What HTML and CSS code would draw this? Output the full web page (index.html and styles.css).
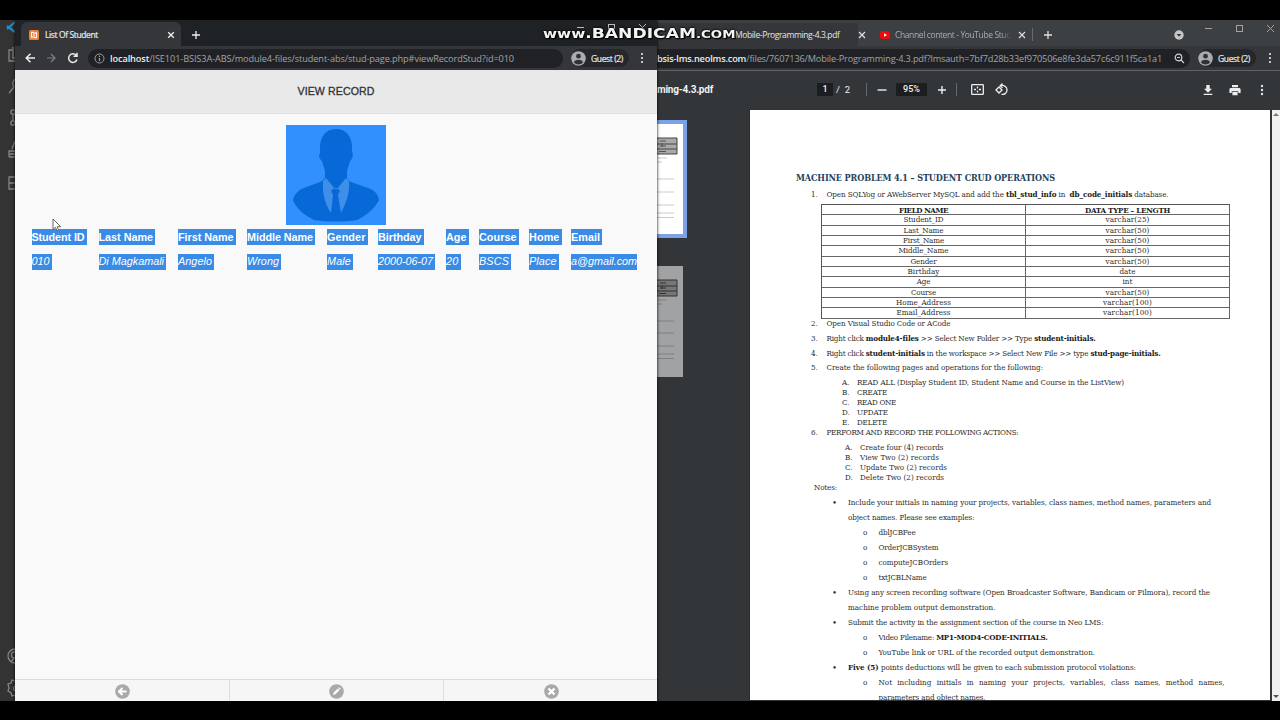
FILE: index.html
```html
<!DOCTYPE html>
<html lang="en">
<head>
<meta charset="utf-8">
<title>List Of Student</title>
<link rel="stylesheet" href="styles.css">
</head>
<body>
<div class="desktop">
  <aside class="activity">
    <svg width="15" height="680" viewBox="0 20 15 680" fill="none" stroke="#858585" stroke-width="1.3">
      <path d="M15 22l-8 7M15 32l-8-6" stroke="#2489ca" stroke-width="2.2"/>
      <path d="M13 47v11h3M12 50H9v11h6"/>
      <path d="M9 93l5-6M15 79a6 6 0 0 0-1 8"/>
      <circle cx="13" cy="112" r="2.2"/><circle cx="13" cy="123" r="2.2"/><path d="M13 114v7"/>
      <path d="M15 141l-3 8M9 157v-6h6M9 154h6M9 157h6"/>
      <path d="M15 177H9v12h6M9 183h6"/>
      <path d="M15 649a7 7 0 0 0 0 14M15 652a3 3 0 0 0-1 6l-3 4"/>
      <path d="M15 681l-3-1-1 3-3 1 1 4-1 3 3 2 1 3 3-1M15 686a3 3 0 0 0 0 5"/>
    </svg>
  </aside>

  <section class="window viewer">
    <div class="v-tabs">
      <div class="v-tab-active"><span class="fit ui" data-w="104.5">Mobile-Programming-4.3.pdf</span></div>
      <svg class="v-x" width="8" height="8" viewBox="0 0 8 8"><path d="M1 1l6 6M7 1L1 7" stroke="#ddd" stroke-width="1.3"/></svg>
      <svg class="yt" width="10" height="8" viewBox="0 0 10 8"><rect width="10" height="8" rx="2" fill="#f00b0b"/><path d="M4 2.2L7 4 4 5.8z" fill="#fff"/></svg>
      <span class="fit ui dim fade" data-w="116">Channel content - YouTube Stud</span>
      <svg class="v-x2" width="8" height="8" viewBox="0 0 8 8"><path d="M1 1l6 6M7 1L1 7" stroke="#ddd" stroke-width="1.2"/></svg>
      <i class="bar"></i>
      <svg class="v-plus" width="10" height="10" viewBox="0 0 10 10"><path d="M5 1v8M1 5h8" stroke="#ddd" stroke-width="1.3"/></svg>
      <svg class="v-down" width="10" height="10" viewBox="0 0 10 10"><circle cx="5" cy="5" r="4.7" fill="#c4c6c8"/><path d="M2.7 4h4.6L5 6.8z" fill="#333"/></svg>
      <svg class="v-ctl" width="74" height="10" viewBox="0 0 74 10" fill="none" stroke="#a0a2a4"><path d="M1 4.500h7"/><rect x="32.500" y="1.500" width="6" height="6"/><path d="M63 1l7 7M70 1l-7 7"/></svg>
    </div>
    <div class="v-addr">
      <div class="v-omni">
        <span class="fit ui url" data-w="505"><b>bsis-lms.neolms.com</b>/files/7607136/Mobile-Programming-4.3.pdf?lmsauth=7bf7d28b33ef970506e8fe3da57c6c911f5ca1a1</span>
        <svg width="11" height="11" viewBox="0 0 11 11" fill="none" stroke="#d0d2d4" stroke-width="1.2"><circle cx="4.500" cy="4.500" r="3.300"/><path d="M7 7l3 3M3 4.500h3"/></svg>
      </div>
      <div class="guest"><svg width="15" height="15" viewBox="0 0 15 15"><circle cx="7.500" cy="7.500" r="7.300" fill="#a8adb3"/><circle cx="7.500" cy="5.200" r="2.400" fill="#303236"/><path d="M2.800 11.200c1.500-3.300 7.900-3.300 9.400 0a6 6 0 0 1-9.400 0z" fill="#303236"/></svg><span class="fit ui" data-w="32">Guest (2)</span></div>
      <svg class="v-dots" width="4" height="12" viewBox="0 0 4 12" fill="#e5e5e5"><circle cx="2" cy="2" r="1.100"/><circle cx="2" cy="6" r="1.100"/><circle cx="2" cy="10" r="1.100"/></svg>
    </div>
    <div class="pdfbar">
      <b class="fit rb pdfname" data-w="56">ming-4.3.pdf</b>
      <span class="box pn">1</span><span class="rb of">/&nbsp; 2</span>
      <i class="bar b1"></i>
      <svg class="minus" width="10" height="10" viewBox="0 0 10 10"><path d="M.5 5h9" stroke="#eee" stroke-width="1.400"/></svg>
      <span class="box pc">95%</span>
      <svg class="plus" width="10" height="10" viewBox="0 0 10 10"><path d="M1 5h8M5 1v8" stroke="#eee" stroke-width="1.400"/></svg>
      <i class="bar b2"></i>
      <svg class="fitp" width="13" height="11" viewBox="0 0 13 11" fill="none" stroke="#eee" stroke-width="1.300"><rect x=".700" y=".700" width="11.600" height="9.600" rx=".6"/><path d="M3 5.500h2M8 5.500h2M6.500 2.500v2M6.500 6.500v2"/></svg>
      <svg class="rot" width="13" height="13" viewBox="0 0 13 13" fill="none" stroke="#eee" stroke-width="1.300"><path d="M4 4l3 3-3 3-3-3zM5.500 2.700c3.500-1 6.500 1 6.500 4.300s-3 5-5.500 4.200M7.500.5L5.200 2.700l2.300 2.200"/></svg>
      <svg class="dl" width="10" height="12" viewBox="0 0 10 12" fill="#eee"><path d="M3.300 1h3.400v3.700H9L5 8.700 1 4.700h2.300zM.7 9.700h8.600V11H.7z"/></svg>
      <svg class="pr" width="12" height="12" viewBox="0 0 12 12" fill="#eee"><path d="M3 1h6v2.300H3zM2 4h8c1 0 1.600.6 1.600 1.600V9H9.300V7.300H2.700V9H.4V5.600C.4 4.600 1 4 2 4zM3.400 8h5.200v3.200H3.400z"/></svg>
      <svg width="4" height="12" viewBox="0 0 4 12" fill="#e5e5e5"><circle cx="2" cy="2" r="1.200"/><circle cx="2" cy="6" r="1.200"/><circle cx="2" cy="10" r="1.200"/></svg>
    </div>
    <div class="v-main">
      <div class="thumbs">
        <div class="thumb sel"><svg width="26" height="111" viewBox="0 0 26 111"><path fill="#a9a9a9" d="M0 14h20v16H0z"/><path d="M0 14h20v16H0M0 20h20M0 25h20" fill="none" stroke="#444"/><path d="M3 17h6M3 22h6M2 27.500h7M5 19v4" stroke="#555"/><path d="M0 34h10M0 38h5M0 55h17M0 68h17M0 81h17M0 89h17M0 93.500h17" stroke="#ccc"/></svg></div>
        <div class="thumb"><svg width="26" height="111" viewBox="0 0 26 111"><path fill="#777" d="M0 14h20v16H0z"/><path d="M0 14h20v16H0M0 20h20M0 25h20" fill="none" stroke="#333"/><path d="M3 17h6M3 22h6M2 27.500h7M5 19v4" stroke="#333"/><path d="M0 34h10M0 38h5M0 55h17M0 67h17M0 80h17M0 88h17M0 92.500h17" stroke="#808182"/></svg></div>
      </div>
      <article class="page">
        <h1 class="l"><span class="fit" data-w="259">MACHINE PROBLEM 4.1 – STUDENT CRUD OPERATIONS</span></h1>
        <div class="l n"><i>1.</i><span class="fit" data-w="342">Open SQLYog or AWebServer MySQL and add the <b>tbl_stud_info</b> in &nbsp;<b>db_code_initials</b> database.</span></div>
        <div class="fields">
          <b><span class="fit" data-w="49">FIELD NAME</span></b><b><span class="fit" data-w="85">DATA TYPE – LENGTH</span></b>
          <p><span class="fit" data-w="40">Student_ID</span></p><p><span class="fit" data-w="44">varchar(25)</span></p>
          <p><span class="fit" data-w="40">Last_Name</span></p><p><span class="fit" data-w="44">varchar(50)</span></p>
          <p><span class="fit" data-w="41">First_Name</span></p><p><span class="fit" data-w="44">varchar(50)</span></p>
          <p><span class="fit" data-w="50">Middle_Name</span></p><p><span class="fit" data-w="44">varchar(50)</span></p>
          <p><span class="fit" data-w="26">Gender</span></p><p><span class="fit" data-w="44">varchar(50)</span></p>
          <p><span class="fit" data-w="32">Birthday</span></p><p><span class="fit" data-w="16">date</span></p>
          <p><span class="fit" data-w="13.5">Age</span></p><p><span class="fit" data-w="10">int</span></p>
          <p><span class="fit" data-w="25">Course</span></p><p><span class="fit" data-w="44">varchar(50)</span></p>
          <p><span class="fit" data-w="55">Home_Address</span></p><p><span class="fit" data-w="49">varchar(100)</span></p>
          <p><span class="fit" data-w="54">Email_Address</span></p><p><span class="fit" data-w="49">varchar(100)</span></p>
        </div>
        <div class="l n t"><i>2.</i><span class="fit" data-w="124">Open Visual Studio Code or ACode</span></div>
        <div class="l n gap2"><i>3.</i><span class="fit" data-w="268.5">Right click <b>module4-files</b> &gt;&gt; Select New Folder &gt;&gt; Type <b>student-initials.</b></span></div>
        <div class="l n"><i>4.</i><span class="fit" data-w="334">Right click <b>student-initials</b> in the workspace &gt;&gt; Select New File &gt;&gt; type <b>stud-page-initials.</b></span></div>
        <div class="l n"><i>5.</i><span class="fit" data-w="216.5">Create the following pages and operations for the following:</span></div>
        <div class="l a t gap3"><i>A.</i><span class="fit" data-w="267">READ ALL (Display Student ID, Student Name and Course in the ListView)</span></div>
        <div class="l a t"><i>B.</i><span class="fit" data-w="30">CREATE</span></div>
        <div class="l a t"><i>C.</i><span class="fit" data-w="39">READ ONE</span></div>
        <div class="l a t"><i>D.</i><span class="fit" data-w="31">UPDATE</span></div>
        <div class="l a t"><i>E.</i><span class="fit" data-w="30">DELETE</span></div>
        <div class="l n t"><i>6.</i><span class="fit" data-w="192">PERFORM AND RECORD THE FOLLOWING ACTIONS:</span></div>
        <div class="l a2 t gap5"><i>A.</i><span class="fit" data-w="83.5">Create four (4) records</span></div>
        <div class="l a2 t"><i>B.</i><span class="fit" data-w="79">View Two (2) records</span></div>
        <div class="l a2 t"><i>C.</i><span class="fit" data-w="87">Update Two (2) records</span></div>
        <div class="l a2 t"><i>D.</i><span class="fit" data-w="84">Delete Two (2) records</span></div>
        <div class="l notes t"><span class="fit" data-w="23">Notes:</span></div>
        <div class="l d gap2"><i>•</i><span class="fit" data-w="363">Include your initials in naming your projects, variables, class names, method names, parameters and</span></div>
        <div class="l d"><i></i><span class="fit" data-w="126.5">object names. Please see examples:</span></div>
        <div class="l o"><i>o</i><span class="fit" data-w="37">dblJCBFee</span></div>
        <div class="l o"><i>o</i><span class="fit" data-w="60">OrderJCBSystem</span></div>
        <div class="l o"><i>o</i><span class="fit" data-w="69.5">computeJCBOrders</span></div>
        <div class="l o"><i>o</i><span class="fit" data-w="48">txtJCBLName</span></div>
        <div class="l d"><i>•</i><span class="fit" data-w="362">Using any screen recording software (Open Broadcaster Software, Bandicam or Filmora), record the</span></div>
        <div class="l d"><i></i><span class="fit" data-w="147.5">machine problem output demonstration.</span></div>
        <div class="l d"><i>•</i><span class="fit" data-w="255.5">Submit the activity in the assignment section of the course in Neo LMS:</span></div>
        <div class="l o"><i>o</i><span class="fit" data-w="169">Video Filename: <b>MP1-MOD4-CODE-INITIALS.</b></span></div>
        <div class="l o"><i>o</i><span class="fit" data-w="216.5">YouTube link or URL of the recorded output demonstration.</span></div>
        <div class="l d"><i>•</i><span class="fit" data-w="288"><b>Five (5)</b> points deductions will be given to each submission protocol violations:</span></div>
        <div class="l o"><i>o</i><span class="fit wide" data-w="346">Not including initials in naming your projects, variables, class names, method names,</span></div>
        <div class="l o"><i></i><span class="fit" data-w="107">parameters and object names.</span></div>
      </article>
      <div class="scroll"><svg width="8" height="8" viewBox="0 0 8 8"><path d="M1 6l3-3 3 3z" fill="#777"/></svg><svg width="8" height="8" viewBox="0 0 8 8"><path d="M1 2h6L4 5z" fill="#555"/></svg></div>
    </div>
  </section>

  <section class="window browser">
    <div class="tabs">
      <div class="tab">
        <svg width="10" height="10" viewBox="0 0 10 10"><rect width="10" height="10" rx="1.500" fill="#ef8138"/><path d="M2.500 3c0-1.200 1.500-1 2.500 0s2.500-1.200 2.500 0v4c0 1.200-1.500 1-2.500 0s-2.500 1.200-2.500 0zM4 5h2" fill="none" stroke="#fff" stroke-width="1.100"/></svg>
        <span class="fit ui" data-w="53">List Of Student</span>
        <svg class="x" width="8" height="8" viewBox="0 0 8 8"><path d="M1.200 1.200l5.600 5.600M6.800 1.200L1.200 6.800" stroke="#eee" stroke-width="1.400"/></svg>
      </div>
      <svg class="new" width="10" height="10" viewBox="0 0 10 10"><path d="M5 1v8M1 5h8" stroke="#eee" stroke-width="1.300"/></svg>
      <svg class="ctl" width="74" height="10" viewBox="0 0 74 10" fill="none" stroke="#bbb"><path d="M1 4.500h7"/><rect x="32.500" y="1.500" width="6" height="6"/><path d="M63 1l7 7M70 1l-7 7"/></svg>
    </div>
    <div class="addr">
      <svg width="53" height="12" viewBox="0 0 53 12" fill="none" stroke="#eee" stroke-width="1.500"><path d="M10 6H1.500M5.500 1.700L1.200 6l4.300 4.300"/><path d="M22 6h8M26 2l4 4-4 4" stroke="#7d8084" stroke-width="1.200"/><path d="M51.200 3.300A4.300 4.300 0 1 0 52 7.500M52 .8v3.400h-3.500"/></svg>
      <div class="omni">
        <svg width="11" height="11" viewBox="0 0 11 11" fill="none" stroke="#9aa0a6"><circle cx="5.500" cy="5.500" r="4.500"/><path d="M5.500 5v3M5.500 2.800v1.200" stroke-width="1.200"/></svg>
        <span class="fit ui url" data-w="404"><b>localhost</b>/ISE101-BSIS3A-ABS/module4-files/student-abs/stud-page.php#viewRecordStud?id=010</span>
      </div>
      <div class="guest"><svg width="15" height="15" viewBox="0 0 15 15"><circle cx="7.500" cy="7.500" r="7.300" fill="#a8adb3"/><circle cx="7.500" cy="5.200" r="2.400" fill="#303236"/><path d="M2.800 11.200c1.500-3.300 7.900-3.300 9.400 0a6 6 0 0 1-9.400 0z" fill="#303236"/></svg><span class="fit ui" data-w="32">Guest (2)</span></div>
      <svg class="dots" width="4" height="12" viewBox="0 0 4 12" fill="#e5e5e5"><circle cx="2" cy="2" r="1.100"/><circle cx="2" cy="6" r="1.100"/><circle cx="2" cy="10" r="1.100"/></svg>
    </div>
    <header class="head"><span class="fit" data-w="77">VIEW RECORD</span></header>
    <main class="record">
      <svg class="avatar" width="100" height="100" viewBox="0 0 100 100"><rect width="100" height="100" fill="#3290fe"/><path d="M34 28C33 12 39 4 50 4s17 8 16 23c2 2 0 8-2 9l-3 10v7l2 3c15 7 28 6 30 19-5 10-14 16-22 20-14 2-29 2-43 0C20 91 10 84 7 75c3-13 17-13 29-19l3-3v-7l-3-10c-2-1-4-6-2-8z" fill="#0768d8"/><path d="M37 56l3-3 9 11h2l9-11 3 3c1 12-3 22-8 32l-3-18 2-4-3-3h-3l-3 3 2 4-2 18c-6-9-9-20-8-32z" fill="#3f8fe9"/></svg>
      <div class="cols">
        <div><b><span class="fit" data-w="53">Student ID</span></b><em><span class="fit" data-w="18">010</span></em></div>
        <div><b><span class="fit" data-w="54.500">Last Name</span></b><em><span class="fit" data-w="65.5">Di Magkamali</span></em></div>
        <div><b><span class="fit" data-w="55.5">First Name</span></b><em><span class="fit" data-w="34">Angelo</span></em></div>
        <div><b><span class="fit" data-w="66">Middle Name</span></b><em><span class="fit" data-w="32">Wrong</span></em></div>
        <div><b><span class="fit" data-w="38.5">Gender</span></b><em><span class="fit" data-w="24">Male</span></em></div>
        <div><b><span class="fit" data-w="43.500">Birthday</span></b><em><span class="fit" data-w="55">2000-06-07</span></em></div>
        <div><b><span class="fit" data-w="20.5">Age</span></b><em><span class="fit" data-w="12.5">20</span></em></div>
        <div><b><span class="fit" data-w="37.5">Course</span></b><em><span class="fit" data-w="30">BSCS</span></em></div>
        <div><b><span class="fit" data-w="30.5">Home</span></b><em><span class="fit" data-w="27.5">Place</span></em></div>
        <div><b><span class="fit" data-w="29">Email</span></b><em class="last"><span class="fit" data-w="66">a@gmail.com</span></em></div>
      </div>
    </main>
    <footer class="foot">
      <a><svg width="15" height="15" viewBox="0 0 15 15"><circle cx="7.500" cy="7.500" r="7.300" fill="#a9a9a9"/><path d="M11.500 7.500h-7M7.500 4L4 7.500 7.500 11" stroke="#fff" stroke-width="2" fill="none"/></svg></a>
      <a><svg width="15" height="15" viewBox="0 0 15 15"><circle cx="7.500" cy="7.500" r="7.300" fill="#a9a9a9"/><path d="M4 11l.7-2.400 4-4 1.700 1.700-4 4zM9.300 4l.9-.8 1.700 1.700-.9.800z" fill="#fff"/></svg></a>
      <a><svg width="15" height="15" viewBox="0 0 15 15"><circle cx="7.500" cy="7.500" r="7.300" fill="#a9a9a9"/><path d="M4.500 4.500l6 6M10.500 4.500l-6 6" stroke="#fff" stroke-width="2.400"/></svg></a>
    </footer>
  </section>

  <div class="watermark"><span>www</span><span class="big">.BANDICAM</span><span class="com">.COM</span></div>
  <svg class="cursor" width="10" height="14" viewBox="0 0 10 14"><path d="M1 1v10.500l2.500-2.200 1.700 3.700 1.500-.7L5.200 8.700h3.500z" fill="#fff" stroke="#555" stroke-width=".9"/></svg>
</div>
<script src="fit.js"></script>
</body>
</html>
```
FILE: styles.css
```css
* { box-sizing: border-box; }
body { margin: 0; width: 1280px; height: 720px; overflow: hidden; background: #000; padding-top: 20px; font-family: "Liberation Sans", sans-serif; }
svg { display: block; flex: none; }
p { margin: 0; }
.desktop { position: relative; width: 1280px; height: 681px; overflow: hidden; background: #323639; }
.fit { display: inline-block; white-space: nowrap; flex: none; }
.ui { font-family: "Open Sans", sans-serif; font-size: 8.500px; color: #e4e6e8; }
.rb { font-family: Roboto, sans-serif; font-size: 10px; color: #f1f1f1; }
.dim { color: #a9acaf; }
.fade { -webkit-mask-image: linear-gradient(90deg, #000 92%, transparent); mask-image: linear-gradient(90deg, #000 92%, transparent); }
.url { font-size: 9.200px; color: #a0a4a8; }
.url b { color: #eceef0; font-weight: 600; }
.activity { width: 15px; height: 681px; background: #333; }
.window { position: absolute; top: 0; height: 681px; display: flex; flex-direction: column; overflow: hidden; }
.bar { width: 1px; height: 13px; background: #66696d; flex: none; }

/* record browser */
.browser { left: 15px; width: 642px; background: #f9f9f9; box-shadow: 0 0 3px #000; }
.tabs { height: 26px; background: #1f2224; display: flex; align-items: center; flex: none; }
.tab { width: 160px; height: 24px; margin: 2px 0 0 6px; border-radius: 6px 6px 0 0; background: #35363a; display: flex; align-items: center; padding: 1px 0 0 8px; }
.tab .ui { margin-left: 6px; }
.x { margin-left: 69px; }
.new { margin: 3px 0 0 10px; }
.ctl { margin: -10px 0 0 375px; }
.addr { height: 24px; flex: none; background: #35363a; display: flex; align-items: center; padding-left: 10px; }
.omni { width: 475px; height: 19px; margin-left: 10px; background: #202124; border-radius: 10px; display: flex; align-items: center; padding-left: 6px; margin-right: 8px; }
.omni .url { margin-left: 5px; }
.guest { height: 18px; width: 58px; border-radius: 9px; background: #25272a; display: flex; align-items: center; flex: none; margin-left: 8px; }
.omni + .guest { margin-left: 0; }
.guest .ui { margin-left: 5px; }
.guest .ui, .tab .ui { -webkit-text-stroke: .2px #eee; }
.dots { margin-left: 11px; }
.head { height: 44px; flex: none; background: #e9e9e9; border-bottom: 1px solid #e0e0e0; display: flex; align-items: center; justify-content: center; padding-bottom: 1px; font-size: 10.600px; color: #333; -webkit-text-stroke: .3px #333; }
.record { flex: 1; background: #f9f9f9; padding-top: 11px; }
.avatar { margin-left: 271px; }
.cols { display: grid; grid-template-columns: 67px 79.500px 69px 80px 51px 68px 33px 50px 42px 70px; padding: 4px 0 0 16.500px; font-size: 10.800px; color: #fff; }
.cols b, .cols em { display: block; width: max-content; height: 16px; line-height: 16px; background: #3a8be6; padding-right: 2px; }
.cols em { margin-top: 8.500px; line-height: 15.500px; }
.cols .last { padding-right: 0; }
.foot { height: 22px; flex: none; background: #f6f6f6; border-top: 1px solid #ddd; display: grid; grid-template-columns: 215px 214px 213px; }
.foot a { display: flex; justify-content: center; padding-top: 4px; border-right: 1px solid #ddd; }
.foot a:last-child { border: 0; padding-left: 2px; }

/* document viewer */
.viewer { left: 657px; width: 623px; background: #323639; }
.v-tabs { height: 26px; flex: none; background: #3c4043; display: flex; align-items: center; padding-top: 3px; }
.v-tab-active { width: 200.500px; height: 24px; display: flex; align-items: center; padding-left: 78px; background: #35363a; }
.yt { margin-left: 14px; }
.v-tabs .dim { margin-left: 5.500px; }
.v-x2 { margin-left: 6.500px; }
.v-tabs .bar { margin-left: 6px; }
.v-plus { margin-left: 10px; }
.v-down { margin-left: 121px; }
.v-ctl { margin: -12px 0 0 20px; }
.v-addr { height: 25px; flex: none; background: #35363a; border-bottom: 1px solid #606366; display: flex; align-items: center; }
.v-omni { width: 533px; height: 19px; border-radius: 0 10px 10px 0; background: #202124; display: flex; align-items: center; }
.v-omni svg { margin-left: 12px; }
.v-dots { margin-left: 12px; }
.pdfbar { height: 39px; flex: none; display: flex; align-items: center; color: #f1f1f1; padding-bottom: 2px; }
.box { background: #1b1d1f; height: 13px; font: 500 9px/13px Roboto, sans-serif; text-align: center; flex: none; }
.pn { width: 16px; margin-left: 104px; }
.of { width: 18px; margin-left: 3px; font-size: 9.500px; white-space: nowrap; flex: none; }
.b1 { margin-left: 12px; }
.minus { margin-left: 10px; }
.pc { width: 31px; margin-left: 9px; }
.plus { margin-left: 10px; }
.b2 { margin-left: 9px; }
.fitp { margin-left: 14px; }
.rot { margin-left: 11px; }
.dl { margin-left: 195px; }
.pr { margin-left: 16px; margin-right: 19px; }
.v-main { flex: 1; display: flex; min-height: 0; }
.thumbs { width: 93px; flex: none; padding-top: 10px; border-right: 1px solid #2b2e31; }
.thumb { width: 26px; height: 111px; margin-top: 28px; background: #a0a2a3; }
.thumb.sel { width: 30px; height: 118px; margin: 0; border: solid #7ba1e6; border-width: 4px 4px 4px 0; background: #fff; }
.page { width: 520px; height: 590px; overflow: hidden; flex: none; background: #fff; padding-top: 60px; color: #2e2e2e; font: 8px/15px "DejaVu Serif Condensed", "DejaVu Serif", serif; }
.l { height: 14.960px; display: flex; align-items: center; }
.l i { font-style: normal; flex: none; }
.l b { color: #1b1b1b; }
.t { height: 10px; line-height: 10px; }
h1.l { margin: 0 0 1.500px; height: 16px; padding-left: 46px; font-size: 9px; color: #243f60; }
.n { padding-left: 61px; }
.n i { width: 15.500px; }
.a { padding-left: 92px; }
.a i { width: 15px; }
.a2 { padding-left: 95px; }
.a2 i { width: 15px; }
.notes { padding-left: 64px; }
.d { padding-left: 82px; }
.d i { width: 16px; font-size: 9.500px; }
.o { padding-left: 113px; }
.o i { width: 15.500px; }
.gap2 { margin-top: 2px; }
.gap3 { margin-top: 3px; }
.gap5 { margin-top: 5px; }
.fields { width: 409px; margin: 1.500px 0 0 71px; display: grid; grid-template-columns: 204px 204px; grid-auto-rows: 10.340px; border: solid #555; border-width: 1px 0 0 1px; text-align: center; line-height: 10.300px; }
.fields > * { border: solid #666; border-width: 0 1px 1px 0; }
.fields b { color: #1b1b1b; }
.scroll { width: 8px; margin-left: 2px; background: #f1f1f1; display: flex; flex-direction: column; justify-content: space-between; flex: none; }

/* overlays */
.watermark { position: absolute; left: 543px; top: 3px; height: 20px; display: flex; align-items: baseline; color: #f4f4f4; font: bold 12px/20px "DejaVu Sans", sans-serif; text-shadow: 0 0 2px #000, 0 0 2px #000, 1px 1px 1px #000; transform: scaleX(1.270); transform-origin: 0 0; }
.big { font-size: 13.500px; }
.com { font-size: 10.500px; }
.cursor { position: absolute; left: 52px; top: 198px; }
```
FILE: fit.js
```js
document.querySelectorAll('.fit').forEach(function (el) {
  var target = parseFloat(el.dataset.w);
  var text = el.textContent.trim();
  var diff = target - el.getBoundingClientRect().width;
  if (el.classList.contains('wide')) {
    el.style.wordSpacing = diff / (text.split(' ').length - 1) + 'px';
  } else {
    el.style.letterSpacing = diff / text.length + 'px';
  }
});
```
